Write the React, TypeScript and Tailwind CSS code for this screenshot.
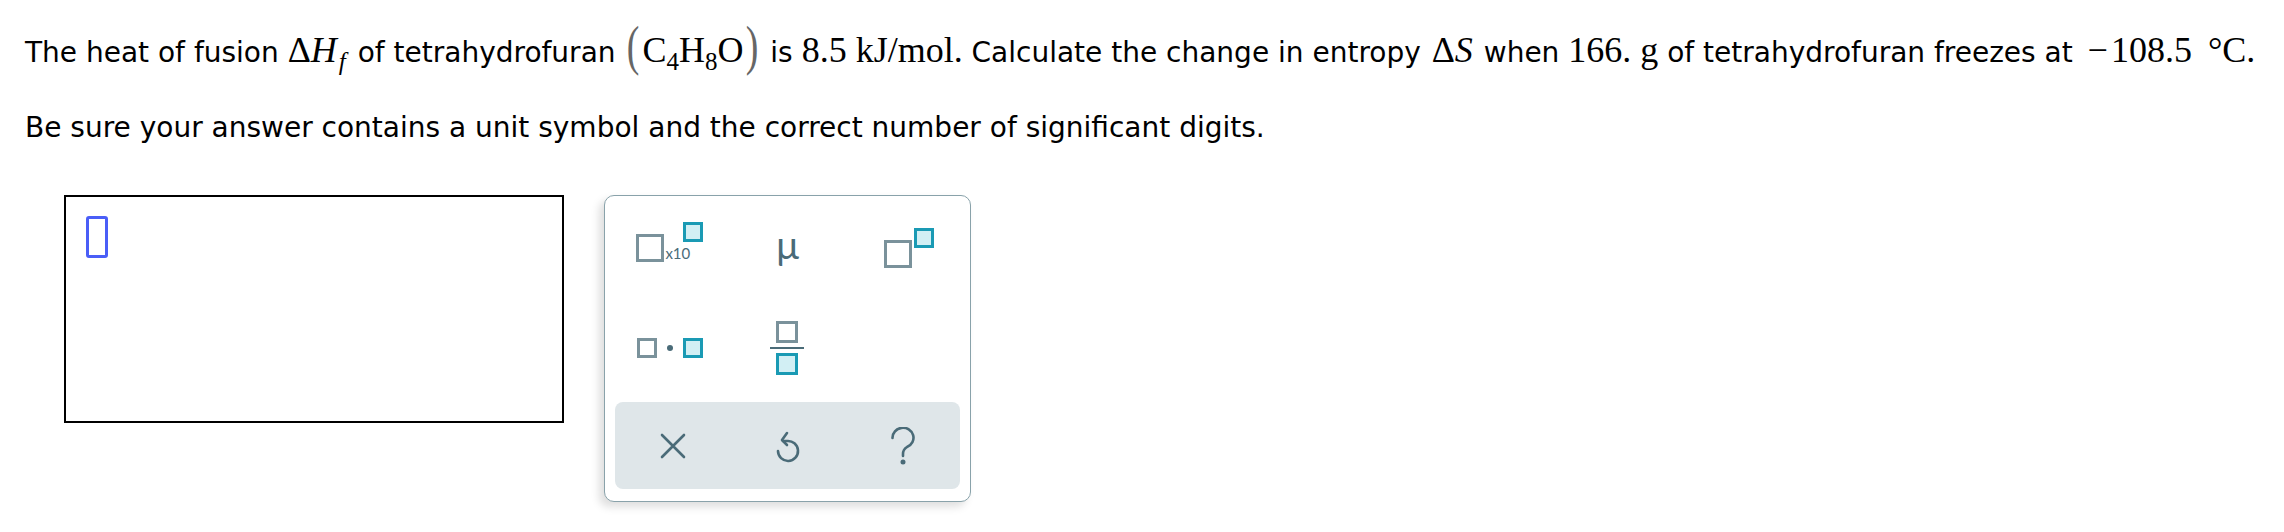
import React from 'react';

const serif = "font-['Liberation_Serif',serif]";

function M({ children, className = '' }: { children: React.ReactNode; className?: string }) {
  return <span className={`${serif} text-[36px] ${className}`}>{children}</span>;
}

function Sub({ children, italic = false }: { children: React.ReactNode; italic?: boolean }) {
  return (
    <span className={`${serif} text-[25px] relative top-[8px] ${italic ? 'italic ml-[2px] mr-[3px]' : ''}`}>{children}</span>
  );
}

function Box({ teal = false, size = 20 }: { teal?: boolean; size?: number }) {
  const cls = teal ? 'border-[#1a9ab4] bg-[#d2eff4]' : 'border-[#7a929b] bg-white';
  const dim = size === 28 ? 'w-[28px] h-[28px]' : size === 22 ? 'w-[22px] h-[22px]' : 'w-[20px] h-[20px]';
  return <div className={`${dim} border-[3px] ${cls}`} />;
}

export default function App() {
  return (
    <div className="w-[2284px] h-[532px] bg-white pl-[25px] pt-[14px] font-['DejaVu_Sans',sans-serif] text-[28px] text-black">
      {/* Question */}
      <p className="h-[60px] leading-[60px] whitespace-nowrap">
        The heat of fusion{' '}
        <M>
          Δ<span className="italic">H</span>
        </M>
        <Sub italic>f</Sub>{' '}
        of tetrahydrofuran{' '}
        <span className="text-[#666] text-[54px] font-['Liberation_Serif',serif] font-light inline-block scale-x-[0.7] relative top-[2px]">(</span>
        <M>C</M>
        <Sub>4</Sub>
        <M>H</M>
        <Sub>8</Sub>
        <M>O</M>
        <span className="text-[#666] text-[54px] font-['Liberation_Serif',serif] font-light inline-block scale-x-[0.7] relative top-[2px]">)</span>{' '}
        is <M>8.5 kJ/mol.</M> Calculate the change in entropy{' '}
        <M className="mx-[2px]">
          Δ<span className="italic">S</span>
        </M>{' '}
        when <M>166. g</M> of tetrahydrofuran freezes at{' '}
        <M className="ml-[6px]">
          −<span className="ml-[3px]">108.5</span>
          <span className="ml-[16px]">°C.</span>
        </M>
      </p>
      <p className="mt-[34px] leading-[40px]">
        Be sure your answer contains a unit symbol and the correct number of significant digits.
      </p>

      <div className="flex gap-[40px] mt-[47px] ml-[39px]">
        {/* Answer field */}
        <div className="w-[500px] h-[228px] border-2 border-black pl-[20px] pt-[19px]">
          <div className="w-[22px] h-[42px] border-[3px] border-[#4a5ef7] rounded-[3px]" />
        </div>

        {/* Keypad */}
        <div className="w-[367px] h-[307px] border-[1.5px] border-[#89a2aa] rounded-[10px] bg-white shadow-[-5px_5px_9px_rgba(0,0,0,0.13)] flex flex-col">
          <div className="grid grid-cols-3 h-[104px] items-center">
            <div className="flex justify-center pl-[8px]">
              <div className="flex items-end">
                <Box size={28} />
                <span className="font-['Lato',sans-serif] text-[15px] text-[#4a6b78] leading-[15px] ml-[1px] mb-[1px]">x10</span>
                <div className="self-start -mt-[12px] -ml-[7px]">
                  <Box teal />
                </div>
              </div>
            </div>
            <div className="flex justify-center">
              <span className="font-['Lato',sans-serif] text-[38px] leading-none text-[#4a6b78] relative top-[-4px]">μ</span>
            </div>
            <div className="flex justify-center">
              <div className="flex items-start pt-[12px]">
                <Box size={28} />
                <div className="-mt-[12px] ml-[2px]">
                  <Box teal />
                </div>
              </div>
            </div>
          </div>

          <div className="grid grid-cols-3 h-[96px] items-center">
            <div className="flex justify-center pl-[8px]">
              <div className="flex items-center gap-[10px]">
                <Box />
                <div className="w-[6px] h-[6px] rounded-full bg-[#4a6b78]" />
                <Box teal />
              </div>
            </div>
            <div className="flex justify-center">
              <div className="flex flex-col items-center">
                <Box size={22} />
                <div className="w-[34px] h-[2px] bg-[#4a6b78] my-[4px]" />
                <Box teal size={22} />
              </div>
            </div>
            <div />
          </div>

          <div className="mx-[10px] mt-[6px] h-[87px] bg-[#dfe6e9] rounded-[8px] grid grid-cols-3 items-center">
            <div className="flex justify-center">
              <svg width="26" height="26" viewBox="0 0 26 26" fill="none" stroke="#4a6b78" strokeWidth="2.6" strokeLinecap="round">
                <path d="M2 2 L24 24 M24 2 L2 24" />
              </svg>
            </div>
            <div className="flex justify-center">
              <svg width="28" height="34" viewBox="0 0 28 34" fill="none" stroke="#4a6b78" strokeWidth="2.6" strokeLinecap="round" strokeLinejoin="round">
                <path d="M4 22 A10 10 0 1 0 13 12 L9 12" />
                <path d="M13 4 L8 11 L13 16" />
              </svg>
            </div>
            <div className="flex justify-center">
              <svg width="26" height="38" viewBox="0 0 26 38" fill="none" stroke="#4a6b78" strokeWidth="2.6" strokeLinecap="round">
                <path d="M2.5 11 A10.5 10 0 1 1 17 20 Q13 22.5 13 27 L13 29" />
                <circle cx="13" cy="35" r="1.2" fill="#4a6b78" />
              </svg>
            </div>
          </div>
        </div>
      </div>
    </div>
  );
}
